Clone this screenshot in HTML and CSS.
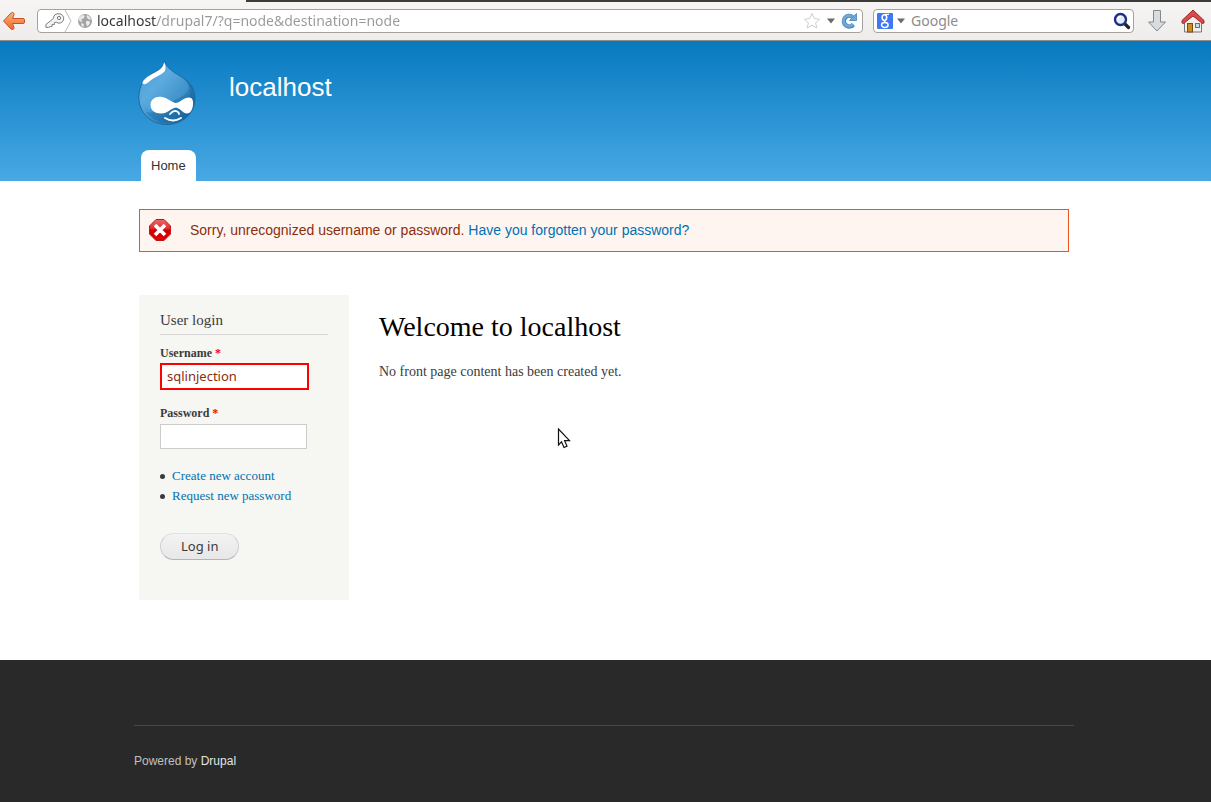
FILE: index.html
```html
<!DOCTYPE html>
<html lang="en">
<head>
  <meta charset="UTF-8" />
  <title>Welcome to localhost | localhost</title>
  <meta name="viewport" content="width=device-width,initial-scale=1"/>
  <link rel="stylesheet" href="styles.css">
</head>
<body>
  <div class="toolbar">
    <button class="tool back" type="button" aria-label="Back">
      <svg width="24" height="20" viewBox="0 0 24 20">
        <defs>
          <linearGradient id="arrow" x1="0" y1="0" x2="0" y2="1">
            <stop offset="0" stop-color="#f7b57c"/>
            <stop offset="1" stop-color="#f0692f"/>
          </linearGradient>
        </defs>
        <path d="M1.500 10 L9 2 Q12 0.500 12 3.500 L10.500 7.500 H21 Q22.500 7.500 22.500 9 V11 Q22.500 12.500 21 12.500 H10.500 L12 16.500 Q12 19.500 9 18 Z" fill="url(#arrow)" stroke="#c9511e" stroke-linejoin="round"/>
      </svg>
    </button>
    <div class="field url">
      <svg class="key" width="34" height="22" viewBox="0 0 34 22">
        <path d="M16 4 a5 5 0 1 1 -3 9 l-2 .5 v2 h-2.500 v2.200 h-2 L5 18.500 H2 v-3 L10 9 a5 5 0 0 1 6 -5z" transform="translate(5 0) scale(.94)" fill="#f4f4f4" stroke="#777"/>
        <circle cx="20" cy="8" r="1.600" fill="#fff" stroke="#777"/>
        <path d="M26 0 L32 11 L26 22" fill="none" stroke="#bbb"/>
      </svg>
      <svg width="16" height="16" viewBox="0 0 16 16">
        <circle cx="8" cy="8" r="7" fill="#a3a3a3"/>
        <path d="M2 4.500 L5.500 1.800 L8 3 L6.500 5.500 L4 6.500 L5.500 8 L4 9 L1.500 7z M10 2 L13 4 L14 7 L11 6 L9.500 4z M9 8 L12.500 8 L13 10.500 L10.500 13.500 L9 11z M4 10 L7 11 L6.500 14 L4.500 13z" fill="#e8e8e8"/>
      </svg>
      <input class="address" type="text" aria-label="Address" value="localhost/drupal7/?q=node&amp;destination=node">
      <svg width="18" height="18" viewBox="0 0 18 18">
        <path d="M9 1.500 L11.300 6.600 L16.600 7.200 L12.600 10.800 L13.800 16 L9 13.200 L4.200 16 L5.400 10.800 L1.400 7.200 L6.700 6.600z" fill="#fff" stroke="#cfcfcf"/>
      </svg>
      <svg class="drop" width="8" height="6" viewBox="0 0 8 6"><path d="M0 0.500 H8 L4 5.500z" fill="#6b6b6b"/></svg>
      <button class="tool" type="button" aria-label="Reload">
        <svg width="16" height="16" viewBox="0 0 16 16">
          <path d="M12.300 11.500 A5.300 5.300 0 1 1 11.500 4" fill="none" stroke="#4784ba" stroke-width="4.400"/>
          <path d="M12 11.200 A5.300 5.300 0 1 1 11.500 4" fill="none" stroke="#70a8d8" stroke-width="2.800"/>
          <path d="M15.500 0.500 V7.500 H8.500z" fill="#70a8d8" stroke="#4784ba" stroke-width=".8"/>
        </svg>
      </button>
    </div>
    <div class="field search">
      <svg width="16" height="16" viewBox="0 0 16 16">
        <rect width="16" height="16" rx="1" fill="#3f78f5"/>
        <ellipse cx="7.400" cy="4.600" rx="2.300" ry="2.900" fill="none" stroke="#fff" stroke-width="1.600"/>
        <path d="M8 1.300 H12 M8 7.500 Q6.500 8.500 8.800 9.500" fill="none" stroke="#fff" stroke-width="1.200"/>
        <ellipse cx="7.800" cy="12" rx="3.300" ry="2.500" fill="none" stroke="#fff" stroke-width="1.400"/>
      </svg>
      <svg width="8" height="6" viewBox="0 0 8 6"><path d="M0 0.500 H8 L4 5.500z" fill="#6b6b6b"/></svg>
      <input class="query" type="text" aria-label="Search" placeholder="Google">
      <button class="tool" type="button" aria-label="Search">
        <svg width="18" height="18" viewBox="0 0 18 18">
          <path d="M11.500 11.500 L15.500 15.500" stroke="#222" stroke-width="3.200" stroke-linecap="round"/>
          <circle cx="7.500" cy="7.500" r="5.500" fill="#e3ecfa" stroke="#1f2f80" stroke-width="2.400"/>
          <path d="M4.500 8 A3.200 3.200 0 0 1 8 4.500" fill="none" stroke="#fff" stroke-width="1.400"/>
        </svg>
      </button>
    </div>
    <button class="tool" type="button" aria-label="Downloads">
      <svg width="20" height="24" viewBox="0 0 20 24">
        <path d="M6.500 1.500 H13.500 V13 H18.500 L10 22 L1.500 13 H6.500z" fill="#d8dcdf" stroke="#84888a" stroke-linejoin="round"/>
      </svg>
    </button>
    <button class="tool home" type="button" aria-label="Home">
      <svg width="24" height="24" viewBox="0 0 24 24">
        <path d="M3.500 12 L12 4 L20.500 12 V23 H3.500z" fill="#f1f0ec" stroke="#777"/>
        <rect x="6.500" y="14.500" width="5" height="8.500" fill="#cf8b1e" stroke="#7c4f08"/>
        <rect x="14.500" y="14.500" width="4" height="4" fill="#c9daea" stroke="#66747f"/>
        <path d="M1 11.500 L12 1 L23 11.500 V14 L21.500 14.500 L12 7 L2.500 14.500 L1 14z" fill="#d8494c" stroke="#a02428" stroke-linejoin="round"/>
      </svg>
    </button>
  </div>

  <header class="header">
    <div class="container">
      <div class="branding">
        <a href="#" class="logo" aria-label="Home">
          <svg width="58" height="66" viewBox="0 0 58 66">
            <defs>
              <linearGradient id="drop" x1="0" y1="0" x2="1" y2="1">
                <stop offset="0" stop-color="#3a94d2"/>
                <stop offset=".35" stop-color="#5aaade"/>
                <stop offset=".7" stop-color="#2a80bd"/>
                <stop offset="1" stop-color="#155f96"/>
              </linearGradient>
            </defs>
            <path d="M26.500 1 C29 8 34 11 42 16 C52 22 57 29 57 38 C57 54 44 64.500 29 64.500 C13 64.500 .8 53 .8 37 C.8 25 7 18 15 13 C22 9 26 6 26.500 1z" fill="url(#drop)" stroke="#20699f"/>
            <path d="M27 3 C28 9 34 12 41 16 C55 25 56 37 44 40 C34 43 30 50 17 51 C5 51 -1 32 6 22 C11 15 25 12 27 3z" fill="#63b0e0" opacity=".3"/>
            <path d="M39 39 C50 34 54 28 48 20 C56 26 59 36 54 50 C50 59 40 63 30 63 C20 63 12 58 8 52 C24 55 29 43 39 39z" fill="#0c5288" opacity=".28"/>
            <path d="M26 2 C28 6 28 10 26 12 C22 16 16 17 12 21 C9 24 6 25 4.500 23.500 C4 21 9 16.500 15 13.500 C21 10.500 25.500 8 26 2z" fill="#fff"/>
            <path d="M12.500 45 C12.500 39 18 36 24 37 C30 38 34 42.500 38 43 C42 42.500 46 37.500 51 37.500 C54.500 37.500 55.500 41 55 45 C54.500 50 52 53.500 49 53.500 C45 53.500 42 48 38 47.500 C33 48 30 53.500 23 53.500 C17 53.500 12.500 50 12.500 45z" fill="#fff"/>
            <path d="M32 54 Q35 50.500 38 51 Q41 52 41 54" fill="none" stroke="#fff" stroke-width="1.800" stroke-linecap="round"/>
            <path d="M27 58 Q35 63 43 58" fill="none" stroke="#fff" stroke-width="2" stroke-linecap="round"/>
          </svg>
        </a>
        <a href="#" class="site-name">localhost</a>
      </div>
      <nav class="menu">
        <a href="#" class="active">Home</a>
      </nav>
    </div>
  </header>

  <main class="main">
    <div class="container">
      <div class="message">
        <svg width="24" height="24" viewBox="0 0 24 24">
          <defs>
            <linearGradient id="stop" x1="0" y1="0" x2="0" y2="1">
              <stop offset="0" stop-color="#ee6a6a"/>
              <stop offset=".45" stop-color="#dc2b2b"/>
              <stop offset=".5" stop-color="#cc0000"/>
              <stop offset="1" stop-color="#e00000"/>
            </linearGradient>
          </defs>
          <path d="M8 1.500 H16 L22.500 8 V16 L16 22.500 H8 L1.500 16 V8z" fill="url(#stop)" stroke="#c41414" stroke-linejoin="round"/>
          <path d="M7 7 L17 17 M17 7 L7 17" stroke="#fff" stroke-width="3.600"/>
        </svg>
        <p>Sorry, unrecognized username or password. <a href="#">Have you forgotten your password?</a></p>
      </div>

      <div class="columns">
        <aside class="sidebar">
          <h2>User login</h2>
          <form>
            <div class="form-item">
              <label for="name">Username <span class="required">*</span></label>
              <input class="text error" type="text" id="name" value="sqlinjection">
            </div>
            <div class="form-item">
              <label for="pass">Password <span class="required">*</span></label>
              <input class="text" type="password" id="pass">
            </div>
            <ul>
              <li><a href="#">Create new account</a></li>
              <li><a href="#">Request new password</a></li>
            </ul>
            <button class="submit" type="button">Log in</button>
          </form>
        </aside>
        <section class="content">
          <h1>Welcome to localhost</h1>
          <p>No front page content has been created yet.</p>
        </section>
      </div>
    </div>
  </main>

  <footer class="footer">
    <div class="container">
      <p>Powered by <a href="#">Drupal</a></p>
    </div>
  </footer>

  <!-- mouse pointer -->
  <svg class="pointer" width="14" height="21" viewBox="0 0 14 21">
    <path d="M1.500 1 V17 L4.500 13.800 L7 19.500 L10 18.200 L7.600 12.700 H12.500z" fill="#fff" stroke="#111" stroke-width="1.200"/>
  </svg>
</body>
</html>
```

FILE: styles.css
```css
* {
  box-sizing: border-box;
}
body {
  margin: 0;
  min-height: 100vh;
  display: flex;
  flex-direction: column;
  position: relative;
  background: #fff;
  color: #3b3b3b;
  font-family: "Liberation Serif", Georgia, serif;
  font-size: 14px;
  line-height: 20px;
}
a {
  color: #0071b3;
  text-decoration: none;
}
svg {
  display: block;
  flex: none;
}
h1, h2, p {
  margin: 0;
  font-weight: normal;
}

/* browser toolbar */
.toolbar {
  display: flex;
  align-items: center;
  gap: 10px;
  height: 41px;
  padding: 2px 6px 0 2px;
  background:
    linear-gradient(#3c3b37, #3c3b37) 246px 0 / 100% 2px no-repeat,
    linear-gradient(#f6f5f4, #efedeb);
  border-bottom: 1px solid #8f8e8c;
}
.tool {
  padding: 0;
  border: 0;
  background: none;
}
.back {
  margin-right: 1px;
}
.home {
  margin-left: 4px;
}
.field {
  display: flex;
  align-items: center;
  height: 24px;
  padding: 0 5px;
  gap: 4px;
  background: #fff;
  border: 1px solid #a5a29d;
  border-radius: 4px;
}
.url {
  flex: 1;
}
.search {
  width: 261px;
  padding: 0 2px 0 3px;
  margin-right: 3px;
}
.key {
  margin-left: -4px;
}
.drop {
  margin: 0 2px;
}
.field input {
  flex: 1;
  min-width: 0;
  padding: 0;
  border: 0;
  outline: 0;
  background: none;
  font: 14px/20px "Noto Sans", sans-serif;
}
/* host part dark, path greyed */
.field .address {
  color: transparent;
  background: linear-gradient(90deg, #333 60px, #999 60px);
  -webkit-background-clip: text;
  background-clip: text;
}
.query::placeholder {
  color: #8c8c8c;
  opacity: 1;
}
.search .query {
  padding-left: 2px;
}

/* page */
.header, .main, .footer {
  padding: 0 3px 0 0;
}
.container {
  max-width: 940px;
  margin: 0 auto;
}
.header {
  background: linear-gradient(#0779bf, #48a9e4);
  font-family: "Liberation Sans", Helvetica, sans-serif;
}
.branding {
  display: flex;
  align-items: flex-start;
  gap: 33px;
  padding: 19px 4px 0;
  height: 109px;
}
.site-name {
  padding-top: 12px;
  color: #fff;
  font-size: 26px;
  line-height: 30px;
}
.menu {
  display: flex;
  padding-left: 7px;
}
.menu a {
  padding: 6px 10px 5px;
  background: #fff;
  border-radius: 8px 8px 0 0;
  color: #333;
  font-size: 13px;
}

.main .container {
  padding: 28px 5px 60px;
}
.message {
  display: flex;
  align-items: center;
  gap: 18px;
  padding: 8px 8px 9px;
  margin-bottom: 43px;
  background: #fef5f1;
  border: 1px solid #ed541d;
  color: #8c2e0b;
  font-family: "Liberation Sans", Helvetica, sans-serif;
}
.columns {
  display: flex;
  gap: 30px;
}
.sidebar {
  width: 210px;
  padding: 15px 21px 40px;
  background: #f6f6f2;
}
.sidebar h2 {
  padding-bottom: 4px;
  margin-bottom: 8px;
  border-bottom: 1px solid #d6d6d6;
  font-size: 15px;
}
.form-item {
  margin-bottom: 13px;
}
.form-item label {
  display: block;
  font-size: 12px;
  font-weight: bold;
}
.required {
  color: #f00;
}
.text {
  display: block;
  width: 147px;
  height: 25px;
  margin-top: 1px;
  padding: 0 5px 2px;
  border: 1px solid #ccc;
  background: #fff;
  color: #3b3b3b;
  font: 13px/20px "Noto Sans", sans-serif;
}
.text.error {
  width: 149px;
  height: 27px;
  margin-top: 0;
  border: 2px solid #f00;
  color: #8c2e0b;
}
.sidebar ul {
  margin: 17px 0 27px;
  padding: 0;
  list-style: none;
  font-size: 13px;
}
.sidebar li {
  display: flex;
  align-items: center;
  gap: 7px;
}
.sidebar li::before {
  content: "";
  width: 5px;
  height: 5px;
  border-radius: 50%;
  background: #3b3b3b;
}
.submit {
  display: block;
  height: 27px;
  padding: 0 20px 2px;
  border: 1px solid #e4e4e4;
  border-color: #e0e0e0 #cfcfcf #b4b4b4;
  border-radius: 14px;
  background: linear-gradient(#f3f3f3, #e7e7e7);
  color: #3a3a3a;
  font: 13px/20px "Noto Sans", sans-serif;
}
.content {
  flex: 1;
  padding-top: 16px;
}
.content h1 {
  margin-bottom: 19px;
  color: #000;
  font-size: 28px;
  line-height: 32px;
}

.footer {
  flex: 1;
  background: #292929;
  color: #c0c0c0;
  font-family: "Liberation Sans", Helvetica, sans-serif;
  font-size: 12px;
}
.footer .container {
  padding-top: 65px;
}
.footer p {
  padding: 25px 0;
  border-top: 1px solid #484848;
}
.footer a {
  color: #e4e4e4;
}

.pointer {
  position: absolute;
  left: 557px;
  top: 428px;
}
```
